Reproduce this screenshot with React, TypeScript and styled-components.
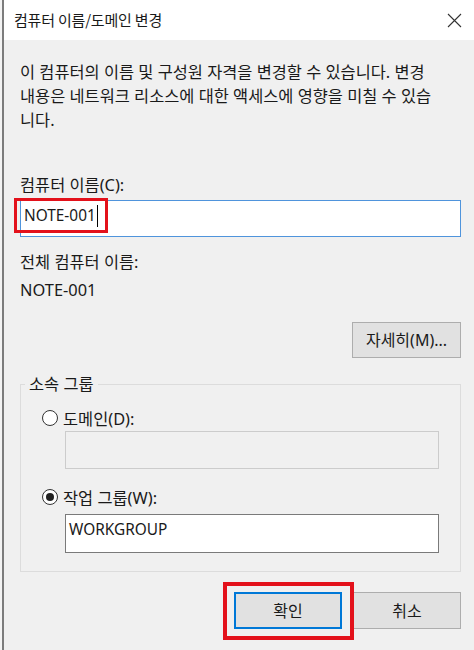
import React from "react";
import styled, { createGlobalStyle } from "styled-components";

const Global = createGlobalStyle`
  html, body { margin: 0; padding: 0; background: #f0f0f0; }
  body { font-family: "Noto Sans", "Noto Sans CJK KR", sans-serif; color: #1a1a1a; }
  * { box-sizing: border-box; }
`;

const Screen = styled.div`
  width: 474px;
  height: 650px;
  display: flex;
  background: #f3f3f3;
  padding-left: 2px;
  overflow: hidden;
`;

const Win = styled.div`
  flex: 1;
  display: flex;
  flex-direction: column;
  border-left: 2px solid #7c7c7c;
  background: #f0f0f0;
`;

const TitleBar = styled.div`
  height: 40px;
  background: #ffffff;
  display: flex;
  align-items: center;
  justify-content: space-between;
  padding: 0 12px 0 10px;
`;

const Title = styled.div`
  font-family: "Noto Sans CJK KR", sans-serif;
  font-size: 15px;
  letter-spacing: -0.2px;
  line-height: 20px;
  color: #1a1a1a;
`;

const CloseBtn = styled.div`
  width: 16px;
  height: 16px;
  display: flex;
  align-items: center;
  justify-content: center;
`;

const Body = styled.div`
  flex: 1;
  display: flex;
  flex-direction: column;
  padding: 20px 13px 0 16px;
`;

const Text = styled.div<{ $mt?: number }>`
  font-size: 16.4px;
  line-height: 24px;
  margin-top: ${(p) => p.$mt ?? 0}px;
  white-space: nowrap;
`;

const FieldWrap = styled.div<{ $mt?: number }>`
  position: relative;
  margin-top: ${(p) => p.$mt ?? 0}px;
`;

const Input = styled.div<{ $variant: "focus" | "normal" | "disabled"; $h: number }>`
  height: ${(p) => p.$h}px;
  background: ${(p) => (p.$variant === "disabled" ? "#f0f0f0" : "#ffffff")};
  border: 1px solid
    ${(p) =>
      p.$variant === "focus" ? "#4f94dc" : p.$variant === "disabled" ? "#cccccc" : "#7a7a7a"};
  font-size: 15.4px;
  line-height: 24px;
  padding: 3px 0 0 3px;
  display: flex;
  align-items: flex-start;
`;

const Caret = styled.span`
  display: inline-block;
  width: 1px;
  height: 22px;
  background: #000;
  margin-left: 1px;
  margin-top: 1px;
`;

const Highlight = styled.div<{ $l: number; $t: number; $w: number; $h: number; $b: number }>`
  position: absolute;
  left: ${(p) => p.$l}px;
  top: ${(p) => p.$t}px;
  width: ${(p) => p.$w}px;
  height: ${(p) => p.$h}px;
  border: ${(p) => p.$b}px solid #e3111b;
  pointer-events: none;
`;

const RightRow = styled.div<{ $mt?: number }>`
  display: flex;
  justify-content: flex-end;
  gap: 11px;
  margin-top: ${(p) => p.$mt ?? 0}px;
`;

const Button = styled.div<{ $primary?: boolean; $w: number; $h: number }>`
  width: ${(p) => p.$w}px;
  height: ${(p) => p.$h}px;
  background: #e1e1e1;
  border: ${(p) => (p.$primary ? "2px solid #0078d7" : "1px solid #adadad")};
  display: flex;
  align-items: center;
  justify-content: center;
  font-size: 16px;
  line-height: 20px;
  color: #1a1a1a;
`;

const Group = styled.fieldset`
  margin: 14px 0 0 0;
  padding: 0 21px 18px 4px;
  border: 1px solid #dcdcdc;
  min-width: 0;
`;

const Legend = styled.legend`
  padding: 0 4px;
  font-size: 16.4px;
  line-height: 24px;
`;

const GroupInner = styled.div`
  display: flex;
  flex-direction: column;
  padding-left: 17px;
`;

const RadioRow = styled.div<{ $mt: number }>`
  display: flex;
  align-items: center;
  gap: 5px;
  height: 24px;
  margin-top: ${(p) => p.$mt}px;
  font-size: 16.4px;
`;

const Radio = styled.span<{ $checked?: boolean }>`
  width: 16px;
  height: 16px;
  border-radius: 50%;
  border: 1px solid #333333;
  background: #ffffff;
  display: flex;
  align-items: center;
  justify-content: center;
  &::after {
    content: "";
    width: 8px;
    height: 8px;
    border-radius: 50%;
    background: ${(p) => (p.$checked ? "#222222" : "transparent")};
  }
`;

const Indented = styled.div<{ $mt: number }>`
  margin-top: ${(p) => p.$mt}px;
  padding-left: 23px;
`;

export default function App() {
  return (
    <>
      <Global />
      <Screen>
        <Win>
          <TitleBar>
            <Title>컴퓨터 이름/도메인 변경</Title>
            <CloseBtn>
              <svg width="15" height="15" viewBox="0 0 15 15">
                <path d="M1 1 L14 14 M14 1 L1 14" stroke="#333" strokeWidth="1.1" fill="none" />
              </svg>
            </CloseBtn>
          </TitleBar>
          <Body>
            <Text>
              이 컴퓨터의 이름 및 구성원 자격을 변경할 수 있습니다. 변경
              <br />
              내용은 네트워크 리소스에 대한 액세스에 영향을 미칠 수 있습
              <br />
              니다.
            </Text>
            <Text $mt={41}>컴퓨터 이름(C):</Text>
            <FieldWrap $mt={3}>
              <Input $variant="focus" $h={37}>
                NOTE-001
                <Caret />
              </Input>
              <Highlight $l={-6} $t={-2} $w={94} $h={35} $b={3} />
            </FieldWrap>
            <Text $mt={13}>전체 컴퓨터 이름:</Text>
            <Text $mt={4}>NOTE-001</Text>
            <RightRow $mt={20}>
              <Button $w={109} $h={36}>자세히(M)...</Button>
            </RightRow>
            <Group>
              <Legend>소속 그룹</Legend>
              <GroupInner>
                <RadioRow $mt={10}>
                  <Radio />
                  도메인(D):
                </RadioRow>
                <Indented $mt={1}>
                  <Input $variant="disabled" $h={38} />
                </Indented>
                <RadioRow $mt={16}>
                  <Radio $checked />
                  작업 그룹(W):
                </RadioRow>
                <Indented $mt={5}>
                  <Input $variant="normal" $h={39}>WORKGROUP</Input>
                </Indented>
              </GroupInner>
            </Group>
            <RightRow $mt={20}>
              <FieldWrap>
                <Button $primary $w={108} $h={37}>확인</Button>
                <Highlight $l={-11} $t={-10} $w={131} $h={58} $b={4} />
              </FieldWrap>
              <Button $w={108} $h={37}>취소</Button>
            </RightRow>
          </Body>
        </Win>
      </Screen>
    </>
  );
}
